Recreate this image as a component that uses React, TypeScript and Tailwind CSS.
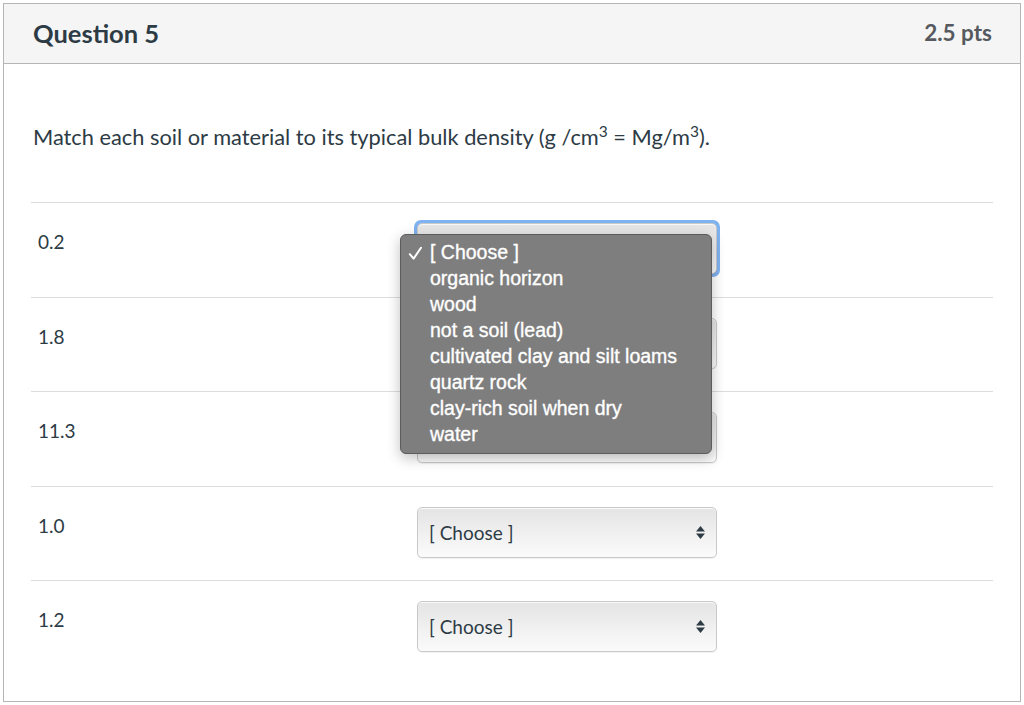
import React from "react";

const rows = ["0.2", "1.8", "11.3", "1.0", "1.2"];
const options = [
  "organic horizon",
  "wood",
  "not a soil (lead)",
  "cultivated clay and silt loams",
  "quartz rock",
  "clay-rich soil when dry",
  "water",
];

function Arrows() {
  return (
    <svg width="9" height="13" viewBox="0 0 9 13" className="shrink-0">
      <path d="M4.5 0 L9 5.5 L0 5.5 Z" fill="#2d3b45" />
      <path d="M4.5 13 L9 7.5 L0 7.5 Z" fill="#2d3b45" />
    </svg>
  );
}

function SelectBox({ focused }: { focused?: boolean }) {
  return (
    <div
      className={
        "rounded-[7px] " +
        (focused ? "p-[3px] bg-[#7fb2f0] -m-[3px]" : "")
      }
    >
      <div className="w-[300px] h-[51px] rounded-[5px] border border-[#c9c9c9] bg-gradient-to-b from-[#e4e4e4] to-[#fbfbfb] shadow-[inset_0_1px_1px_rgba(255,255,255,0.8),0_1px_1px_rgba(0,0,0,0.06)] flex items-center pl-[11px] pr-[11px] justify-between">
        {!focused && (
          <span className="text-[19px] text-[#2d3b45] leading-none">[ Choose ]</span>
        )}
        {focused ? <span /> : <Arrows />}
      </div>
    </div>
  );
}

export default function App() {
  return (
    <div
      className="w-[1024px] h-[705px] bg-white pt-[3px] pl-[3px]"
      style={{ fontFamily: "Lato, 'Noto Sans', sans-serif" }}
    >
      <div className="w-[1018px] h-[699px] border border-[#b5b5b5] relative">
        <div className="h-[60px] bg-[#f5f5f5] border-b border-[#b5b5b5] flex items-center justify-between pl-[29px] pr-[28px]">
          <span className="text-[25.5px] font-bold text-[#2d3b45] leading-none">Question 5</span>
          <span className="text-[22.5px] font-bold text-[#565a5e] leading-none">2.5 pts</span>
        </div>
        <div className="px-[27px] pt-[59px]">
          <p className="text-[21.8px] text-[#2d3b45] leading-[28px] pl-[2px]">
            Match each soil or material to its typical bulk density (g /cm
            <sup className="text-[15.5px] relative -top-[8px]">3</sup> = Mg/m
            <sup className="text-[15.5px] relative -top-[8px]">3</sup>).
          </p>
          <div className="mt-[51px]">
            {rows.map((r, i) => (
              <div
                key={r}
                className="h-[94.5px] border-t border-[#dcdcdc] flex items-start"
              >
                <div className="w-[386px] pl-[7px] pt-[29px] text-[19px] text-[#2d3b45] leading-[20px]">
                  {r}
                </div>
                <div className="pt-[20px]">
                  <SelectBox focused={i === 0} />
                </div>
              </div>
            ))}
          </div>
        </div>

        <div
          className="absolute left-[396px] top-[230px] w-[312px] h-[220px] rounded-[6px] bg-[#7e7e7e] border border-[#5c5c5c] shadow-[0_4px_14px_rgba(0,0,0,0.25)] pt-[5px] text-white text-[19.5px] [-webkit-text-stroke:0.35px_white]"
          style={{ fontFamily: "'Liberation Sans', Arial, sans-serif" }}
        >
          <div className="h-[26px] flex items-center">
            <span className="w-[29px] pl-[7px] flex items-center">
              <svg width="15" height="15" viewBox="0 0 15 15">
                <path d="M1.8 8.2 L5.6 12.6 L13 1.8" fill="none" stroke="white" strokeWidth="2" strokeLinecap="round" strokeLinejoin="round" />
              </svg>
            </span>
            <span>[ Choose ]</span>
          </div>
          {options.map((o) => (
            <div key={o} className="h-[26px] flex items-center pl-[29px]">
              {o}
            </div>
          ))}
        </div>
      </div>
    </div>
  );
}
